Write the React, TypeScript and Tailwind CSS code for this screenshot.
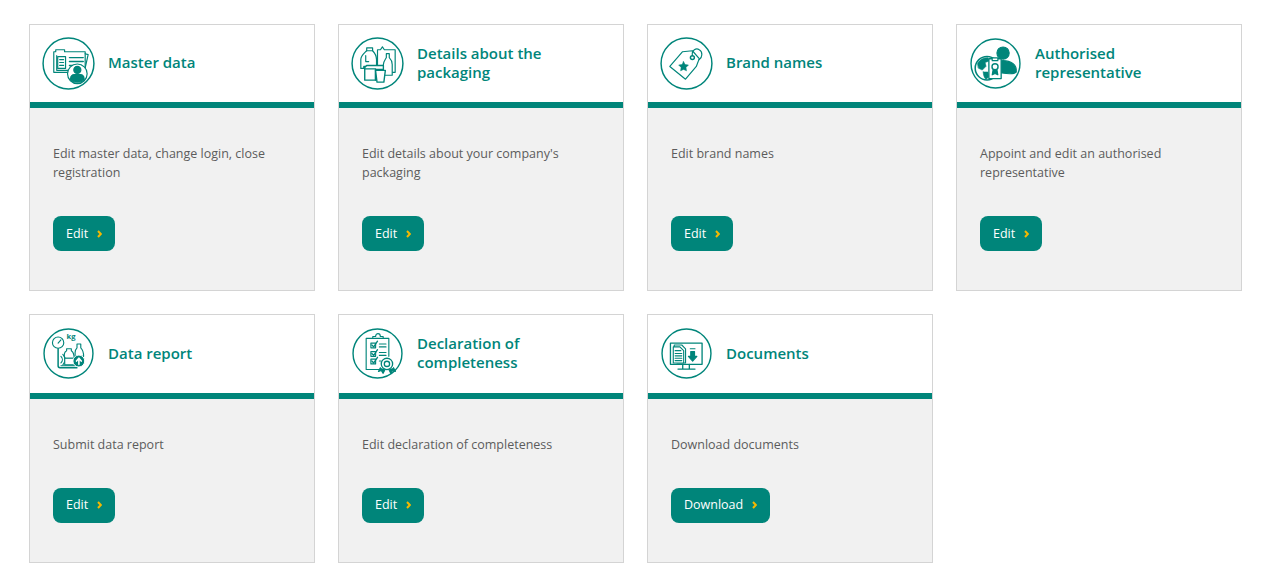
const teal = '#00857a';

function IconBase({ children, small }: { children: React.ReactNode; small?: boolean }) {
    return (
        <svg viewBox="0 0 54 54" className={small ? 'w-[51px] h-[51px] mx-px mb-px shrink-0' : 'w-[53px] h-[53px] shrink-0'} fill="none" stroke={teal} strokeWidth="1.2" strokeLinejoin="round" strokeLinecap="round">
            <circle cx="27" cy="27" r="25.9" strokeWidth="1.5" />
            {children}
        </svg>
    );
}

function MasterIcon() {
    return (
        <IconBase>
            <path d="M44 17 L47 18 L43 36" />
            <path d="M38 36 H12 V15 H14 V13 H23 V15 H44 V34" />
            <path d="M15 34 V19 M15 34 H30" />
            <rect x="16" y="20" width="8" height="12" />
            <path d="M18 23 H22 M18 26 H22 M18 29 H22" />
            <path d="M28 21 H42 M28 25 H42 M28 29 H40" strokeWidth="1.5" />
            <circle cx="36" cy="37.5" r="10" fill="#fff" />
            <circle cx="36" cy="33.5" r="3.6" fill={teal} />
            <path d="M29 43 C29 38 32 38 36 38 C40 38 43 38 43 43 C41 47 31 47 29 43 Z" fill={teal} />
        </IconBase>
    );
}

function PackagingIcon() {
    return (
        <IconBase>
            <path d="M27 30 V13 H30 L32 10 L34 13 H45 V36 H42" />
            <path d="M16 11 H22 V14 C25 17 26 20 26 23 V30 H13 V32 H10 V23 C10 19 13 17 16 14 Z" fill="#fff" />
            <path d="M16 14 H22 M15 19 V25 H18" />
            <path d="M36 17 H39 V21 C41 23 42 25 42 28 V39 H33 V28 C33 25 35 23 36 21 Z" fill="#fff" />
            <path d="M13 32 L16 29 H33 V33 H25 V44 H14 V32 Z" fill="#fff" strokeWidth="1.4" />
            <path d="M14 32.5 H25 V44" strokeWidth="1.4" />
            <path d="M25 34 H35 L33.5 46 H26.5 Z" fill="#fff" strokeWidth="1.4" />
        </IconBase>
    );
}

function BrandIcon() {
    return (
        <IconBase>
            <path d="M10 30 L23 15 L33 14 L40 22 L37 30 L26 43 Z" />
            <circle cx="33" cy="21" r="2" strokeWidth="1.5" />
            <path d="M33 19 C32 13 37 11 40 13 C44 15 43 21 40 23" />
            <path d="M24 25 L25.5 28 L29 28.5 L26.5 31 L27 34.5 L24 33 L21 34.5 L21.5 31 L19 28.5 L22.5 28 Z" fill={teal} strokeWidth="0.5" />
        </IconBase>
    );
}

function RepIcon() {
    return (
        <IconBase small>
            <circle cx="35" cy="16" r="6.5" fill={teal} />
            <path d="M25 36 C24 27 29 24 35 24 C43 24 50 28 49 36 C47 38 40 38 34 37 Z" fill={teal} />
            <circle cx="18" cy="32" r="13" fill="#fff" stroke="#fff" strokeWidth="2" />
            <circle cx="18" cy="32" r="12.5" strokeWidth="1.6" />
            <path d="M8 27 C11 22 15 21 19 21 L21 24 L16 26 L17 30 L13 34 L9 32 Z M14 36 L19 36 L20 41 L17 44 C15 42 14 39 14 36 Z" fill={teal} stroke={teal} strokeWidth="0.6" />
            <rect x="20" y="22" width="13" height="21" fill="#fff" strokeWidth="1.4" />
            <path d="M23.5 21 H29.5 V24 H23.5 Z" fill="#fff" />
            <circle cx="26.5" cy="30.5" r="3.2" strokeWidth="1.5" />
            <path d="M24.5 33.5 L23.5 39 L26.5 37.5 L29.5 39 L28.5 33.5" fill={teal} />
        </IconBase>
    );
}

function ReportIcon() {
    return (
        <IconBase small>
            <circle cx="16" cy="15.5" r="6" />
            <path d="M16 16 L19 12.5" />
            <text x="25" y="12" fontFamily="'Open Sans', sans-serif" fontSize="8" fontWeight="700" fill={teal} stroke="none">kg</text>
            <path d="M16 22 V40 C16 41 17 42 18 42 H36" strokeWidth="1.6" />
            <path d="M19 40 H34" />
            <path d="M19 30 C21 32 21 35 19 37 M21 28 C24 31 24 36 21 39" />
            <path d="M25 22 H30 V24 C33 26 33 29 33 32 H23 C22 28 23 25 25 24 Z" />
            <path d="M36 17 H40 V21 C43 24 43 27 43 30 H34 V26 C34 24 35 22 36 21 Z" />
            <path d="M23 32 H34 V39 H23 Z" fill="#fff" />
            <circle cx="38" cy="35" r="6.3" fill={teal} stroke="#fff" strokeWidth="1" />
            <path d="M38 38.5 V32.5 M35.5 35 L38 32 L40.5 35" stroke="#fff" strokeWidth="1.7" />
        </IconBase>
    );
}

function DeclarationIcon() {
    return (
        <IconBase small>
            <path d="M30 44 H15 V11 H39 V30" />
            <path d="M22 11 V9 H25 C25 5 30 5 30 9 H33 V11" />
            <rect x="20" y="16" width="5" height="5" />
            <rect x="20" y="25" width="5" height="5" />
            <rect x="20" y="33" width="5" height="5" />
            <path d="M21 18 L23 20 L27 14 M21 27 L23 29 L27 23 M21 35 L23 37 L27 31" strokeWidth="1.4" />
            <path d="M29 17 H36 M29 20 H36 M29 26 H36 M29 29 H36 M29 35 H31" />
            <path d="M30 42 L28 46 L31 45 L33 48 L35 44 M39 44 L41 48 L43 45 L46 46 L44 42" fill={teal} />
            <circle cx="37" cy="38" r="6" fill="#fff" strokeWidth="1.4" />
            <circle cx="37" cy="38" r="2.8" strokeWidth="1.4" />
        </IconBase>
    );
}

function DocumentsIcon() {
    return (
        <IconBase small>
            <rect x="10" y="16" width="33.5" height="22.5" strokeWidth="1.4" />
            <path d="M23 38.5 V43 M30 38.5 V43 M18 43.5 H36" strokeWidth="1.4" />
            <path d="M14 21 V18 H22 L26 22 V37 H17" />
            <path d="M13 20 H20 L24 24 V37 H13 Z" fill="#fff" />
            <path d="M15 24 H21 M15 27 H22 M15 29.5 H22 M15 32 H22 M15 34.5 H22" />
            <path d="M31 22 H36" />
            <path d="M31.5 25 H35.5 V30 H38 L33.5 35 L29 30 H31.5 Z" fill={teal} />
        </IconBase>
    );
}

function Chevron() {
    return (
        <svg viewBox="0 0 5 8" className="w-[5px] h-[8px] ml-[9px]" fill="none" stroke="#f4b800" strokeWidth="2">
            <path d="M1 1 L3.8 4 L1 7" />
        </svg>
    );
}

const cards = [
    { titulo: 'Master data', texto: 'Edit master data, change login, close registration', botao: 'Edit', Icon: MasterIcon },
    { titulo: 'Details about the packaging', texto: "Edit details about your company's packaging", botao: 'Edit', Icon: PackagingIcon },
    { titulo: 'Brand names', texto: 'Edit brand names', botao: 'Edit', Icon: BrandIcon },
    { titulo: 'Authorised representative', texto: 'Appoint and edit an authorised representative', botao: 'Edit', Icon: RepIcon },
    { titulo: 'Data report', texto: 'Submit data report', botao: 'Edit', Icon: ReportIcon },
    { titulo: 'Declaration of completeness', texto: 'Edit declaration of completeness', botao: 'Edit', Icon: DeclarationIcon },
    { titulo: 'Documents', texto: 'Download documents', botao: 'Download', Icon: DocumentsIcon },
];

export default function App() {
    return (
        <main className="bg-white min-h-[568px] pt-6 pl-[29px] font-['Open_Sans',sans-serif] overflow-hidden">
            <section className="grid grid-cols-[repeat(4,285.5px)] gap-x-[23.5px] gap-y-[23.1px]">
                {cards.map(({ titulo, texto, botao, Icon }) => (
                    <article key={titulo} className="border border-[#d4d4d4] flex flex-col">
                        <header className="h-[77.4px] flex items-center pl-3 gap-[13px] bg-white">
                            <Icon />
                            <h2 className="text-[15px] leading-[19px] font-semibold text-[#00857a] w-[190px] mb-[2px]">{titulo}</h2>
                        </header>
                        <div className="h-[6px] bg-[#00857a]" />
                        <div className="flex-1 flex flex-col items-start bg-[#f1f1f1] pt-9 pb-[38.9px] px-[23px]">
                            <p className="flex-1 text-[12.5px] leading-[19px] text-[#5c5c5c] mb-[34px] max-w-[230px]">{texto}</p>
                            <button className="h-[35px] pl-[13px] pr-[12.5px] rounded-lg bg-[#00857a] text-white text-[12.5px] inline-flex items-center">
                                {botao}
                                <Chevron />
                            </button>
                        </div>
                    </article>
                ))}
            </section>
        </main>
    );
}
